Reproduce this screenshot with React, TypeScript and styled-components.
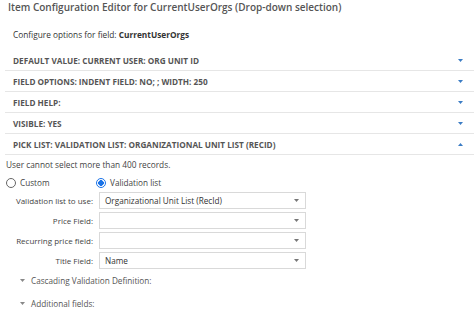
import styled, { createGlobalStyle } from 'styled-components';

const GlobalStyle = createGlobalStyle`
  body {
    margin: 0;
    background: #fff;
    font-family: "Open Sans", "Liberation Sans", sans-serif;
    color: #333;
  }
`;

interface Section {
  label: string;
  open?: boolean;
}

const sections: Section[] = [
  { label: 'Default value: Current user: Org unit ID' },
  { label: 'Field options: Indent field: No; ; Width: 250' },
  { label: 'Field help:' },
  { label: 'Visible: Yes' },
  { label: 'Pick list: Validation list: Organizational unit list (RecId)', open: true },
];

interface FormRow {
  label: string;
  value: string;
}

const formRows: FormRow[] = [
  { label: 'Validation list to use:', value: 'Organizational Unit List (RecId)' },
  { label: 'Price Field:', value: '' },
  { label: 'Recurring price field:', value: '' },
  { label: 'Title Field:', value: 'Name' },
];

const Caret = ({ up, color }: { up?: boolean; color: string }) => (
  <svg width="5" height="3" viewBox="0 0 5 3">
    <path d={up ? 'M0 3 L2.5 0 L5 3 Z' : 'M0 0 L5 0 L2.5 3 Z'} fill={color} />
  </svg>
);

const App = () => {
  return (
    <>
      <GlobalStyle />
      <Page>
        <Title>Item Configuration Editor for CurrentUserOrgs (Drop-down selection)</Title>
        <Intro>
          Configure options for field: <b>CurrentUserOrgs</b>
        </Intro>
        <SectionList>
          {sections.map((s) => (
            <SectionRow key={s.label}>
              <span>{s.label}</span>
              <Caret up={s.open} color="#3b7cc4" />
            </SectionRow>
          ))}
        </SectionList>
        <Body>
          <Note>User cannot select more than 400 records.</Note>
          <RadioLine>
            <RadioItem $width={90}>
              <Radio />
              Custom
            </RadioItem>
            <RadioItem>
              <Radio $checked />
              Validation list
            </RadioItem>
          </RadioLine>
          <FormGrid>
            {formRows.map((r) => (
              <Field key={r.label}>
                <FieldLabel>{r.label}</FieldLabel>
                <SelectBox>
                  <span>{r.value}</span>
                  <Caret color="#777" />
                </SelectBox>
              </Field>
            ))}
          </FormGrid>
          <Expander>
            <Caret color="#888" />
            Cascading Validation Definition:
          </Expander>
          <Expander>
            <Caret color="#888" />
            Additional fields:
          </Expander>
        </Body>
      </Page>
    </>
  );
};

export default App;

const Page = styled.div`
  width: 474px;
  height: 314px;
  overflow: hidden;
`;

const Title = styled.div`
  padding-left: 8px;
  height: 15px;
  line-height: 15px;
  font-size: 10px;
  font-weight: 600;
  color: #555;
`;

const Intro = styled.div`
  box-sizing: border-box;
  padding: 13px 0 0 13px;
  height: 35px;
  line-height: 14px;
  font-size: 8.3px;
  color: #333;

  > b {
    font-weight: 700;
  }
`;

const SectionList = styled.div`
  margin-left: 5px;
`;

const SectionRow = styled.div`
  display: flex;
  align-items: center;
  justify-content: space-between;
  height: 20px;
  padding: 0 11px 0 8px;
  border-bottom: 1px solid #e6e6e6;
  font-size: 8.2px;
  font-weight: 700;
  text-transform: uppercase;
  color: #555;
`;

const Body = styled.div`
  padding: 3px 0 0 6px;
  font-size: 8.2px;
  line-height: 12px;
  color: #444;
`;

const Note = styled.div`
  height: 14px;
  display: flex;
  align-items: center;
  font-size: 8.3px;
`;

const RadioLine = styled.div`
  display: flex;
  align-items: center;
  height: 18px;
  margin-top: 2px;
`;

const RadioItem = styled.label<{ $width?: number }>`
  display: flex;
  align-items: center;
  gap: 4px;
  width: ${(p) => (p.$width ? `${p.$width}px` : 'auto')};
`;

const Radio = styled.span<{ $checked?: boolean }>`
  box-sizing: border-box;
  width: 10px;
  height: 10px;
  border-radius: 50%;
  border: 1px solid ${(p) => (p.$checked ? '#1a73e8' : '#666')};
  background: ${(p) => (p.$checked ? 'radial-gradient(circle, #1a73e8 0 2.6px, #fff 3px)' : '#fff')};
`;

const FormGrid = styled.div`
  display: flex;
  flex-direction: column;
  gap: 3px;
`;

const Field = styled.div`
  display: grid;
  grid-template-columns: 87px 207px;
  column-gap: 6px;
  align-items: center;
  height: 17px;
`;

const FieldLabel = styled.div`
  text-align: right;
  font-size: 8px;
  color: #444;
  white-space: nowrap;
`;

const SelectBox = styled.div`
  box-sizing: border-box;
  display: flex;
  align-items: center;
  justify-content: space-between;
  height: 17px;
  padding: 0 6px 0 5px;
  border: 1px solid #d9d9d9;
  background: #fff;
  color: #333;
`;

const Expander = styled.div`
  display: flex;
  align-items: center;
  gap: 6px;
  padding-left: 14px;
  height: 23px;
  color: #555;

  &:first-of-type {
    margin-top: 2px;
  }
`;
